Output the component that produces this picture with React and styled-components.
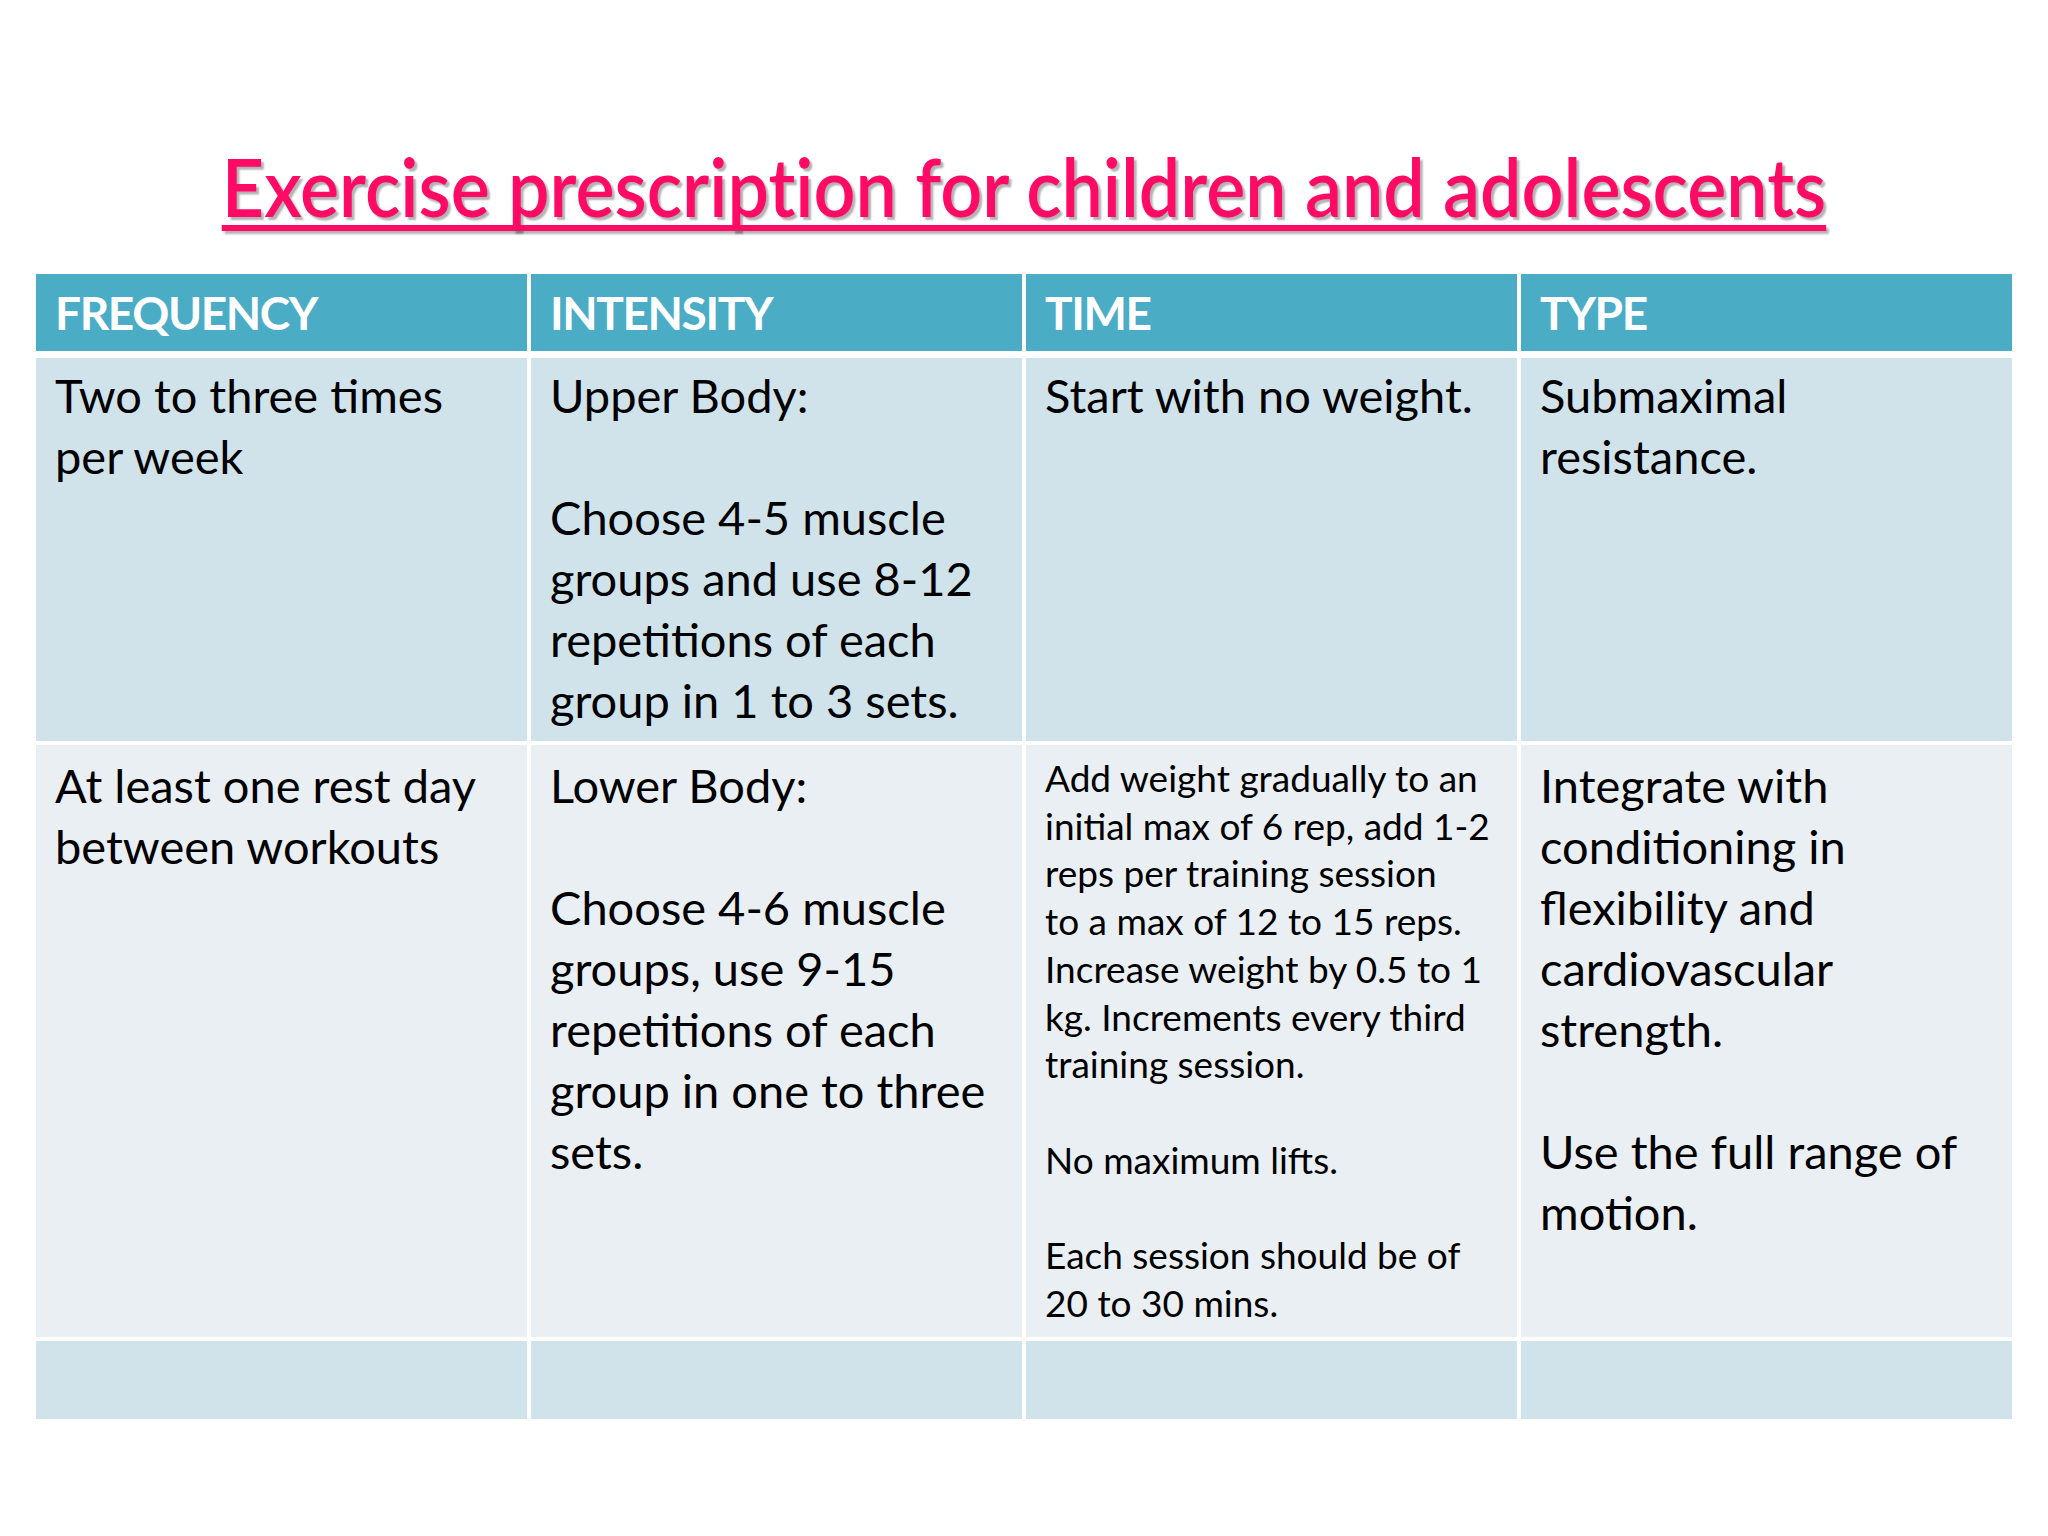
import React from "react";
import styled, { createGlobalStyle } from "styled-components";

const GlobalStyle = createGlobalStyle`
  html, body { margin: 0; padding: 0; background: #ffffff; }
  #root { width: 2048px; }
`;

const Page = styled.div`
  width: 2048px;
  height: 1536px;
  box-sizing: border-box;
  padding-top: 146px;
  display: flex;
  flex-direction: column;
  align-items: center;
  background: #ffffff;
`;

const TitleWrap = styled.div`
  height: 80px;
  display: flex;
  justify-content: center;
  width: 100%;
`;

const Title = styled.h1`
  margin: 0;
  display: inline-block;
  font-family: "Comic Sans MS", Lato, sans-serif;
  font-weight: 600;
  font-size: 80px;
  line-height: 80px;
  white-space: nowrap;
  font-variant-ligatures: none;
  color: #ff0a65;
  text-decoration: underline;
  text-decoration-thickness: 6px;
  text-underline-offset: 8px;
  text-decoration-skip-ink: none;
  text-shadow: 3px 3px 2px rgba(0, 0, 0, 0.3);
  transform: scaleX(${(p) => p.$sx});
  transform-origin: center;
`;

const Table = styled.div`
  margin-top: 48px;
  width: 1976px;
  display: flex;
  flex-direction: column;
  gap: 4px;
`;

const Row = styled.div`
  display: grid;
  grid-template-columns: repeat(4, 1fr);
  column-gap: 4px;
  height: ${(p) => p.$h}px;
  margin-bottom: ${(p) => p.$mb || 0}px;
`;

const HeadCell = styled.div`
  background: #4bacc6;
  color: #ffffff;
  font-family: Lato, "Open Sans", sans-serif;
  font-weight: 700;
  font-size: 46px;
  letter-spacing: -1.4px;
  line-height: 76px;
  padding: 1px 19px 0;
  white-space: nowrap;
`;

const Cell = styled.div`
  background: ${(p) => (p.$band ? "#d0e3ea" : "#e9eff3")};
  color: #000000;
  font-family: Lato, "Open Sans", sans-serif;
  font-weight: 400;
  font-size: ${(p) => (p.$small ? 37 : 47)}px;
  line-height: ${(p) => (p.$small ? 47.7 : 61)}px;
  padding: ${(p) => p.$pt}px 19px 0;
  white-space: pre;
  overflow: hidden;
`;

const headers = ["FREQUENCY", "INTENSITY", "TIME", "TYPE"];

const rows = [
  {
    h: 383,
    band: true,
    pt: 7,
    cells: [
      { text: "Two to three times\nper week" },
      {
        text:
          "Upper Body:\n\nChoose 4-5 muscle\ngroups and use 8-12\nrepetitions of each\ngroup in 1 to 3 sets.",
      },
      { text: "Start with no weight." },
      { text: "Submaximal\nresistance." },
    ],
  },
  {
    h: 592,
    band: false,
    pt: 10,
    cells: [
      { text: "At least one rest day\nbetween workouts" },
      {
        text:
          "Lower Body:\n\nChoose 4-6 muscle\ngroups, use 9-15\nrepetitions of each\ngroup in one to three\nsets.",
      },
      {
        small: true,
        text:
          "Add weight gradually to an\ninitial max of 6 rep, add 1-2\nreps per training session\nto a max of 12 to 15 reps.\nIncrease weight by 0.5 to 1\nkg. Increments every third\ntraining session.\n\nNo maximum lifts.\n\nEach session should be of\n20 to 30 mins.",
      },
      {
        text:
          "Integrate with\nconditioning in\nflexibility and\ncardiovascular\nstrength.\n\nUse the full range of\nmotion.",
      },
    ],
  },
  {
    h: 78,
    band: true,
    pt: 7,
    cells: [{ text: "" }, { text: "" }, { text: "" }, { text: "" }],
  },
];

export default function App() {
  return (
    <>
      <GlobalStyle />
      <Page>
        <TitleWrap>
          <Title $sx={0.92}>Exercise prescription for children and adolescents</Title>
        </TitleWrap>
        <Table>
          <Row $h={76} $mb={4}>
            {headers.map((h) => (
              <HeadCell key={h}>{h}</HeadCell>
            ))}
          </Row>
          {rows.map((r, i) => (
            <Row key={i} $h={r.h}>
              {r.cells.map((c, j) => (
                <Cell
                  key={j}
                  $band={r.band}
                  $small={c.small}
                  $pt={c.small ? r.pt - 1 : r.pt}
                >
                  {c.text}
                </Cell>
              ))}
            </Row>
          ))}
        </Table>
      </Page>
    </>
  );
}
